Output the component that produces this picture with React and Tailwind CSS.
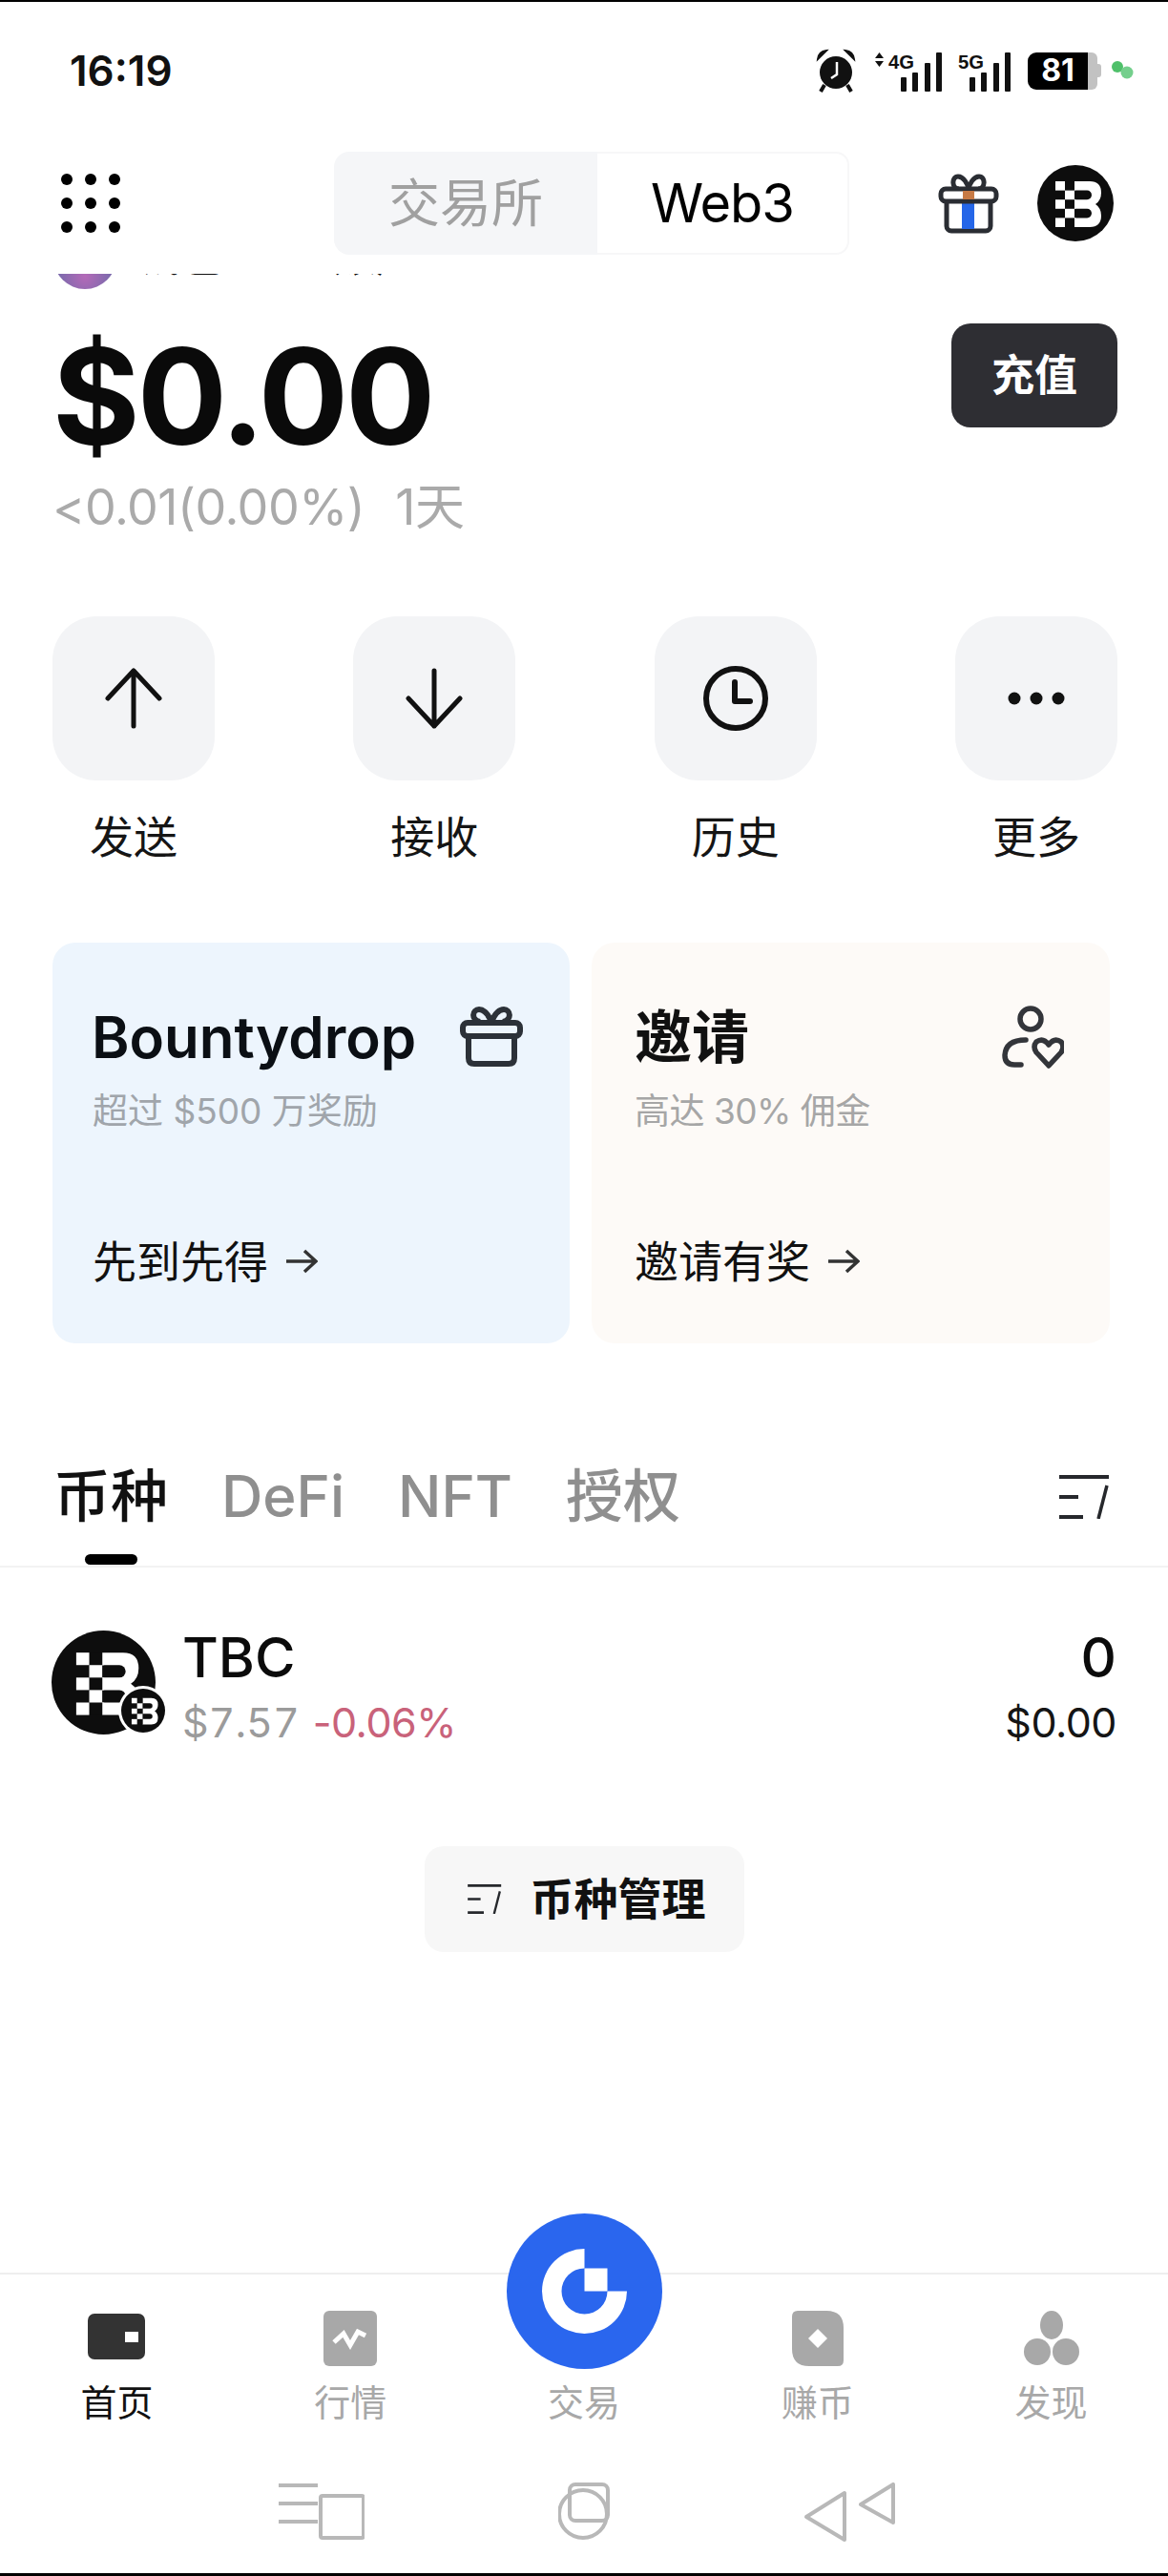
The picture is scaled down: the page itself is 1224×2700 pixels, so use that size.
// App.jsx - wallet home screen
const FONT = "font-['Inter','Noto_Sans_CJK_SC',sans-serif]";

function TbcLogo({ size }) {
  return (
    <svg width={size} height={size} viewBox="0 0 80 80" className="block">
      <circle cx="40" cy="40" r="40" fill="#0d0d0d" />
      <path d="M39 17H55Q67 17 67 29Q67 37 61 41Q67 45 67 53Q67 65 55 65H39Z" fill="#fff" />
      <rect x="36" y="26.6" width="21" height="9.6" rx="4.8" fill="#0d0d0d" />
      <rect x="36" y="45.8" width="21" height="9.6" rx="4.8" fill="#0d0d0d" />
      <rect x="29" y="17" width="10" height="48" fill="#0d0d0d" />
      <rect x="19" y="17" width="10" height="9.6" fill="#fff" />
      <rect x="29" y="26.6" width="10" height="9.6" fill="#fff" />
      <rect x="19" y="36.2" width="10" height="9.6" fill="#fff" />
      <rect x="29" y="45.8" width="10" height="9.6" fill="#fff" />
      <rect x="19" y="55.4" width="10" height="9.6" fill="#fff" />
    </svg>
  );
}

function SortIcon({ w, h }) {
  return (
    <svg width={w} height={h} viewBox="0 0 53 46" className="block">
      <path d="M0 2H52M0 23H20M0 44H25" stroke="#26282c" strokeWidth="4" fill="none" />
      <path d="M50 11L41 46" stroke="#26282c" strokeWidth="3.5" fill="none" />
    </svg>
  );
}

function Signal({ label, arrows }) {
  const x = arrows ? 30 : 12;
  return (
    <svg width={arrows ? 75 : 55} height="44" viewBox={arrows ? "0 0 75 44" : "0 0 55 44"} className="block">
      {arrows && <path d="M3 9L7.500 3L12 9ZM3 12L7.500 18L12 12Z" fill="#111" />}
      <text x={arrows ? 17 : 0} y="20" fontSize="21" fontWeight="700" fill="#111" fontFamily="Liberation Sans, sans-serif" textLength="27" lengthAdjust="spacingAndGlyphs">{label}</text>
      <g fill="#111">
        <rect x={x} y="29" width="6" height="15" rx="1" />
        <rect x={x + 12} y="24" width="6" height="20" rx="1" />
        <rect x={x + 25} y="14" width="6" height="30" rx="1" />
        <rect x={x + 37} y="3" width="6" height="41" rx="1" />
      </g>
    </svg>
  );
}

function StatusBar() {
  return (
    <div className="h-[144px] pl-[73px] pr-[34px] flex items-center justify-between">
      <span className="text-[44px] leading-none font-semibold text-[#111]">16:19</span>
      <div className="flex items-center">
        <svg width="42" height="46" viewBox="0 0 42 46" className="block">
          <circle cx="21" cy="25" r="17" fill="#111" />
          <path d="M2 11Q3 3 11 2ZM40 11Q39 3 31 2Z" fill="#111" stroke="#111" strokeWidth="2" />
          <path d="M9 38L5 45M33 38L37 45" stroke="#111" strokeWidth="4" />
          <path d="M22 14V27L16 31" stroke="#fff" strokeWidth="2.500" fill="none" />
        </svg>
        <div className="ml-[17px]"><Signal label="4G" arrows /></div>
        <div className="ml-[15px]"><Signal label="5G" /></div>
        <div className="ml-[18px] flex items-center">
          <div className="w-[63px] h-[39px] bg-black rounded-l-[9px] flex items-center justify-center text-white text-[32px] font-bold">81</div>
          <div className="w-[10px] h-[39px] bg-[#c2c2c2] rounded-r-[6px]" />
          <div className="w-[4px] h-[14px] bg-[#c2c2c2] rounded-r-[3px]" />
        </div>
        <svg width="26" height="22" viewBox="0 0 26 22" className="block ml-[10px]">
          <circle cx="7" cy="7" r="6" fill="#4fc06a" />
          <circle cx="17" cy="13" r="6.500" fill="#74cf8c" />
        </svg>
      </div>
    </div>
  );
}

function Header() {
  return (
    <div className="h-[134px] pl-[64px] pr-[57px] flex items-center">
      <div className="w-[62px] grid grid-cols-3 gap-y-[13px] gap-x-[13px]">
        {Array.from({ length: 9 }).map((_, i) => (
          <div key={i} className="w-[12px] h-[12px] rounded-full bg-black" />
        ))}
      </div>
      <div className="ml-[224px] flex h-[108px] w-[540px] items-stretch">
        <div className="w-[276px] rounded-l-[16px] bg-[#f5f6f8] flex items-center justify-center text-[54px] text-[#a0a0a0]">交易所</div>
        <div className="w-[264px] rounded-r-[14px] bg-white border-2 border-l-0 border-[#f7f7f8] flex items-center justify-center text-[56px] text-black tracking-[-1px]">Web3</div>
      </div>
      <svg width="64" height="64" viewBox="0 0 64 64" className="block ml-auto">
        <rect x="9" y="25" width="46" height="36" rx="5" fill="#fff" stroke="#2a2d33" strokeWidth="5" />
        <rect x="25" y="24" width="13" height="35" fill="#2566e8" />
        <path d="M22 17C14 17 14 4 21 4C27 4 31 12 32 17C33 12 37 4 43 4C50 4 50 17 42 17" fill="none" stroke="#2a2d33" strokeWidth="5" />
        <rect x="3" y="17" width="58" height="13" rx="5" fill="#fff" stroke="#2a2d33" strokeWidth="5" />
        <rect x="26" y="19" width="12" height="9" fill="#c77a45" />
      </svg>
      <div className="ml-[40px]"><TbcLogo size={80} /></div>
    </div>
  );
}

// row that has scrolled under the header, only its lower edge is still visible
function ClippedAccountRow() {
  return (
    <div className="mt-[7px] h-[16px] overflow-hidden pl-[56px] flex items-start text-[44px] leading-[50px] text-[#111]">
      <div className="w-[66px] h-[66px] -mt-[50px] rounded-full bg-[radial-gradient(circle_at_50%_80%,#b46ab8,#5a6aa5_70%)] shrink-0" />
      <span className="ml-[23px] -mt-[43px] w-[205px]">钱包</span>
      <span className="-mt-[43px] w-[320px]">账户</span>
      <span className="-mt-[43px] text-[#999]">一</span>
    </div>
  );
}

function Balance() {
  return (
    <div className="pl-[55px] pr-[53px] flex justify-between items-start">
      <div>
        <div className="mt-[42px] text-[140px] leading-[140px] font-bold text-[#0a0a0a] tracking-[-3px]">$0.00</div>
        <div className="mt-[19px] text-[52px] leading-[56px] text-[#aaaaaa] tracking-[-0.5px]">
          &lt;0.01(0.00%)<span className="ml-[32px]">1天</span>
        </div>
      </div>
      <div className="mt-[36px] w-[174px] h-[109px] rounded-[20px] bg-[#2e2e33] text-white text-[45px] font-semibold flex items-center justify-center">充值</div>
    </div>
  );
}

function ActionIcon({ name }) {
  if (name === 'up') return (
    <svg width="60" height="64" viewBox="0 0 60 64" fill="none" stroke="#111" strokeWidth="5" strokeLinecap="round" strokeLinejoin="round"><path d="M30 3V61M3 32L30 3L57 32" /></svg>
  );
  if (name === 'down') return (
    <svg width="60" height="64" viewBox="0 0 60 64" fill="none" stroke="#111" strokeWidth="5" strokeLinecap="round" strokeLinejoin="round"><path d="M30 3V61M3 32L30 61L57 32" /></svg>
  );
  if (name === 'clock') return (
    <svg width="70" height="70" viewBox="0 0 70 70" fill="none" stroke="#111" strokeWidth="6" strokeLinecap="round" strokeLinejoin="round"><circle cx="35" cy="35" r="31" /><path d="M34 18V38H50" /></svg>
  );
  return (
    <svg width="60" height="14" viewBox="0 0 60 14" fill="#111"><circle cx="7" cy="7" r="6.500" /><circle cx="30" cy="7" r="6.500" /><circle cx="53" cy="7" r="6.500" /></svg>
  );
}

function Actions() {
  const items = [
    { icon: 'up', label: '发送' },
    { icon: 'down', label: '接收' },
    { icon: 'clock', label: '历史' },
    { icon: 'more', label: '更多' },
  ];
  return (
    <div className="mt-[86px] pl-[55px] pr-[53px] flex justify-between">
      {items.map((it) => (
        <div key={it.label} className="w-[170px] flex flex-col items-center">
          <div className="w-[170px] h-[172px] rounded-[46px] bg-[#f3f4f6] flex items-center justify-center">
            <ActionIcon name={it.icon} />
          </div>
          <div className="mt-[31px] text-[46px] leading-[56px] text-[#151515]">{it.label}</div>
        </div>
      ))}
    </div>
  );
}

function Cards() {
  return (
    <div className="mt-[83px] pl-[55px] pr-[61px] flex gap-[23px]">
      <div className="w-[542px] h-[420px] rounded-[24px] bg-[#edf5fd] pl-[42px] pr-[48px] pt-[65px] pb-[58px] flex flex-col">
        <div className="flex justify-between items-center h-[68px]">
          <span className="text-[60px] leading-[68px] font-semibold text-[#0b0f14] -ml-[1px]">Bountydrop</span>
          <svg width="68" height="64" viewBox="0 0 68 64" fill="none" stroke="#2c3138" strokeWidth="6" strokeLinejoin="round">
            <rect x="4" y="17" width="60" height="14" rx="5" />
            <path d="M10 31V54Q10 60 16 60H52Q58 60 58 54V31" />
            <path d="M22 16C12 14 14 3 21 3C27 3 31 9 34 16C37 9 41 3 47 3C54 3 56 14 46 16" />
          </svg>
        </div>
        <div className="mt-[20px] text-[37px] leading-[48px] text-[#a0a5ab]">超过 $500 万奖励</div>
        <div className="mt-auto flex items-center text-[46px] leading-[56px] text-[#111]">
          先到先得
          <svg width="34" height="28" viewBox="0 0 34 28" fill="none" stroke="#333" strokeWidth="3.500" className="ml-[18px]"><path d="M1 14H32M20 3L32 14L20 25" /></svg>
        </div>
      </div>
      <div className="w-[543px] h-[420px] rounded-[24px] bg-[#fdfaf7] pl-[45px] pr-[48px] pt-[65px] pb-[58px] flex flex-col">
        <div className="flex justify-between items-center h-[68px]">
          <span className="text-[60px] leading-[68px] font-semibold text-[#111]">邀请</span>
          <svg width="66" height="66" viewBox="0 0 66 66" fill="none" stroke="#33353a" strokeWidth="5.500" strokeLinecap="round" strokeLinejoin="round">
            <circle cx="31" cy="14" r="11" />
            <path d="M26 36Q5 36 4 52Q4 62 14 62H21" />
            <path d="M50 63L37 49Q33 43 37 38Q44 33 50 41Q56 33 63 38Q67 43 63 49Z" />
          </svg>
        </div>
        <div className="mt-[20px] text-[37px] leading-[48px] text-[#a6a6a6] tracking-[-0.5px]">高达 30% 佣金</div>
        <div className="mt-auto flex items-center text-[46px] leading-[56px] text-[#111]">
          邀请有奖
          <svg width="34" height="28" viewBox="0 0 34 28" fill="none" stroke="#333" strokeWidth="3.500" className="ml-[18px]"><path d="M1 14H32M20 3L32 14L20 25" /></svg>
        </div>
      </div>
    </div>
  );
}

function Tabs() {
  return (
    <div className="mt-[122px] pl-[56px] pr-[61px] pb-[1px] border-b-2 border-[#f3f3f3] flex justify-between">
      <div className="flex gap-[56px] font-medium text-[#8f8f8f] text-[60px] leading-[76px]">
        <div className="flex flex-col items-center">
          <span className="text-[#111]">币种</span>
          <div className="mt-[23px] w-[55px] h-[11px] rounded-full bg-black" />
        </div>
        <span>DeFi</span>
        <span>NFT</span>
        <span>授权</span>
      </div>
      <div className="mt-[16px]"><SortIcon w={53} h={46} /></div>
    </div>
  );
}

function TokenRow() {
  return (
    <div className="mt-[66px] pl-[54px] pr-[54px] flex">
      <div className="relative w-[109px] h-[109px]">
        <TbcLogo size={109} />
        <div className="absolute left-[70px] top-[58px] rounded-full bg-white p-[3px]">
          <TbcLogo size={46} />
        </div>
      </div>
      <div className="ml-[28px] flex-1">
        <div className="text-[58px] leading-[56px] font-medium text-[#0b0b0b]">TBC</div>
        <div className="mt-[14px] text-[43px] leading-[52px] text-[#9b9b9b]">
          <span className="tabular-nums">$7.57</span><span className="ml-[14px] text-[#c9627a] tracking-[-0.5px]">-0.06%</span>
        </div>
      </div>
      <div className="text-right">
        <div className="text-[58px] leading-[56px] font-medium text-[#0b0b0b]">0</div>
        <div className="mt-[14px] text-[43px] leading-[52px] text-[#151515] tracking-[-0.5px]">$0.00</div>
      </div>
    </div>
  );
}

function ManageButton() {
  return (
    <div className="mt-[104px] flex justify-center">
      <div className="w-[335px] h-[111px] rounded-[20px] bg-[#f7f7f7] flex items-center pl-[45px]">
        <SortIcon w={36} h={31} />
        <span className="ml-[30px] text-[46px] font-semibold text-[#111]">币种管理</span>
      </div>
    </div>
  );
}

function NavIcon({ name }) {
  if (name === 'home') return (
    <svg width="60" height="58" viewBox="0 0 60 58"><rect y="3" width="60" height="48" rx="7" fill="#333" /><rect x="39" y="22" width="14" height="11" fill="#fff" /></svg>
  );
  if (name === 'market') return (
    <svg width="56" height="58" viewBox="0 0 56 58"><rect width="56" height="58" rx="6" fill="#a8a8a8" /><path d="M11 33L21 24L28 36L36 22L44 26" fill="none" stroke="#fff" strokeWidth="5" /></svg>
  );
  if (name === 'earn') return (
    <svg width="54" height="58" viewBox="0 0 54 58"><path d="M6 0H36Q54 0 54 18V52Q54 58 48 58H18Q0 58 0 40V6Q0 0 6 0Z" fill="#a8a8a8" /><path d="M27 19L37 29L27 39L17 29Z" fill="#fff" /></svg>
  );
  return (
    <svg width="58" height="58" viewBox="0 0 58 58" fill="#a8a8a8"><ellipse cx="29" cy="15" rx="12" ry="15" /><circle cx="14" cy="43" r="14" /><circle cx="44" cy="43" r="14" /></svg>
  );
}

function BottomNav() {
  const items = [
    { icon: 'home', label: '首页', active: true },
    { icon: 'market', label: '行情' },
    { icon: 'trade', label: '交易' },
    { icon: 'earn', label: '赚币' },
    { icon: 'discover', label: '发现' },
  ];
  return (
    <div className="mt-auto border-t-2 border-[#eeeeee] grid grid-cols-5">
      {items.map((it) => (
        <div key={it.label} className="flex flex-col items-center">
          {it.icon === 'trade' ? (
            <svg width="163" height="163" viewBox="0 0 163 163" className="block -mt-[64px] ml-[2px] relative z-10">
              <circle cx="81.500" cy="81.500" r="81.500" fill="#2a66ee" />
              <path d="M81.500 37A44.500 44.500 0 1 0 126 81.500H105.500A24 24 0 1 1 81.500 57.500Z" fill="#fff" />
              <rect x="81.500" y="57.500" width="24" height="24" fill="#fff" />
            </svg>
          ) : (
            <div className="mt-[38px] h-[58px]"><NavIcon name={it.icon} /></div>
          )}
          <div className={`text-[38px] leading-[46px] ${it.icon === 'trade' ? 'mt-[12px]' : 'mt-[15px]'} ${it.active ? 'text-[#111]' : 'text-[#a8a8a8]'}`}>{it.label}</div>
        </div>
      ))}
    </div>
  );
}

function SystemNav() {
  return (
    <div className="mt-[61px] pl-[292px] flex items-start gap-[203px]">
      <svg width="90" height="60" viewBox="0 0 90 60" fill="none" stroke="#b8b8b8" strokeWidth="4">
        <path d="M0 3H41M0 22H41M0 41H41" />
        <rect x="44" y="14" width="45" height="44" rx="2" />
      </svg>
      <svg width="55" height="60" viewBox="0 0 55 60" fill="none" stroke="#b8b8b8" strokeWidth="4">
        <rect x="12" y="2" width="40" height="38" rx="6" />
        <circle cx="26" cy="33" r="25" />
      </svg>
      <svg width="97" height="62" viewBox="0 0 97 62" fill="none" stroke="#b8b8b8" strokeWidth="4" strokeLinejoin="round" className="-ml-[1px]">
        <path d="M43 11V60L3 36Z" />
        <path d="M94 2V42L60 23Z" />
      </svg>
    </div>
  );
}

export default function App() {
  return (
    <div className={`w-[1224px] h-[2700px] bg-white flex flex-col overflow-hidden ${FONT}`}>
      <div className="h-[2px] bg-black" />
      <StatusBar />
      <Header />
      <ClippedAccountRow />
      <Balance />
      <Actions />
      <Cards />
      <Tabs />
      <TokenRow />
      <ManageButton />
      <BottomNav />
      <SystemNav />
      <div className="mt-[33px] h-[3px] bg-black" />
    </div>
  );
}
